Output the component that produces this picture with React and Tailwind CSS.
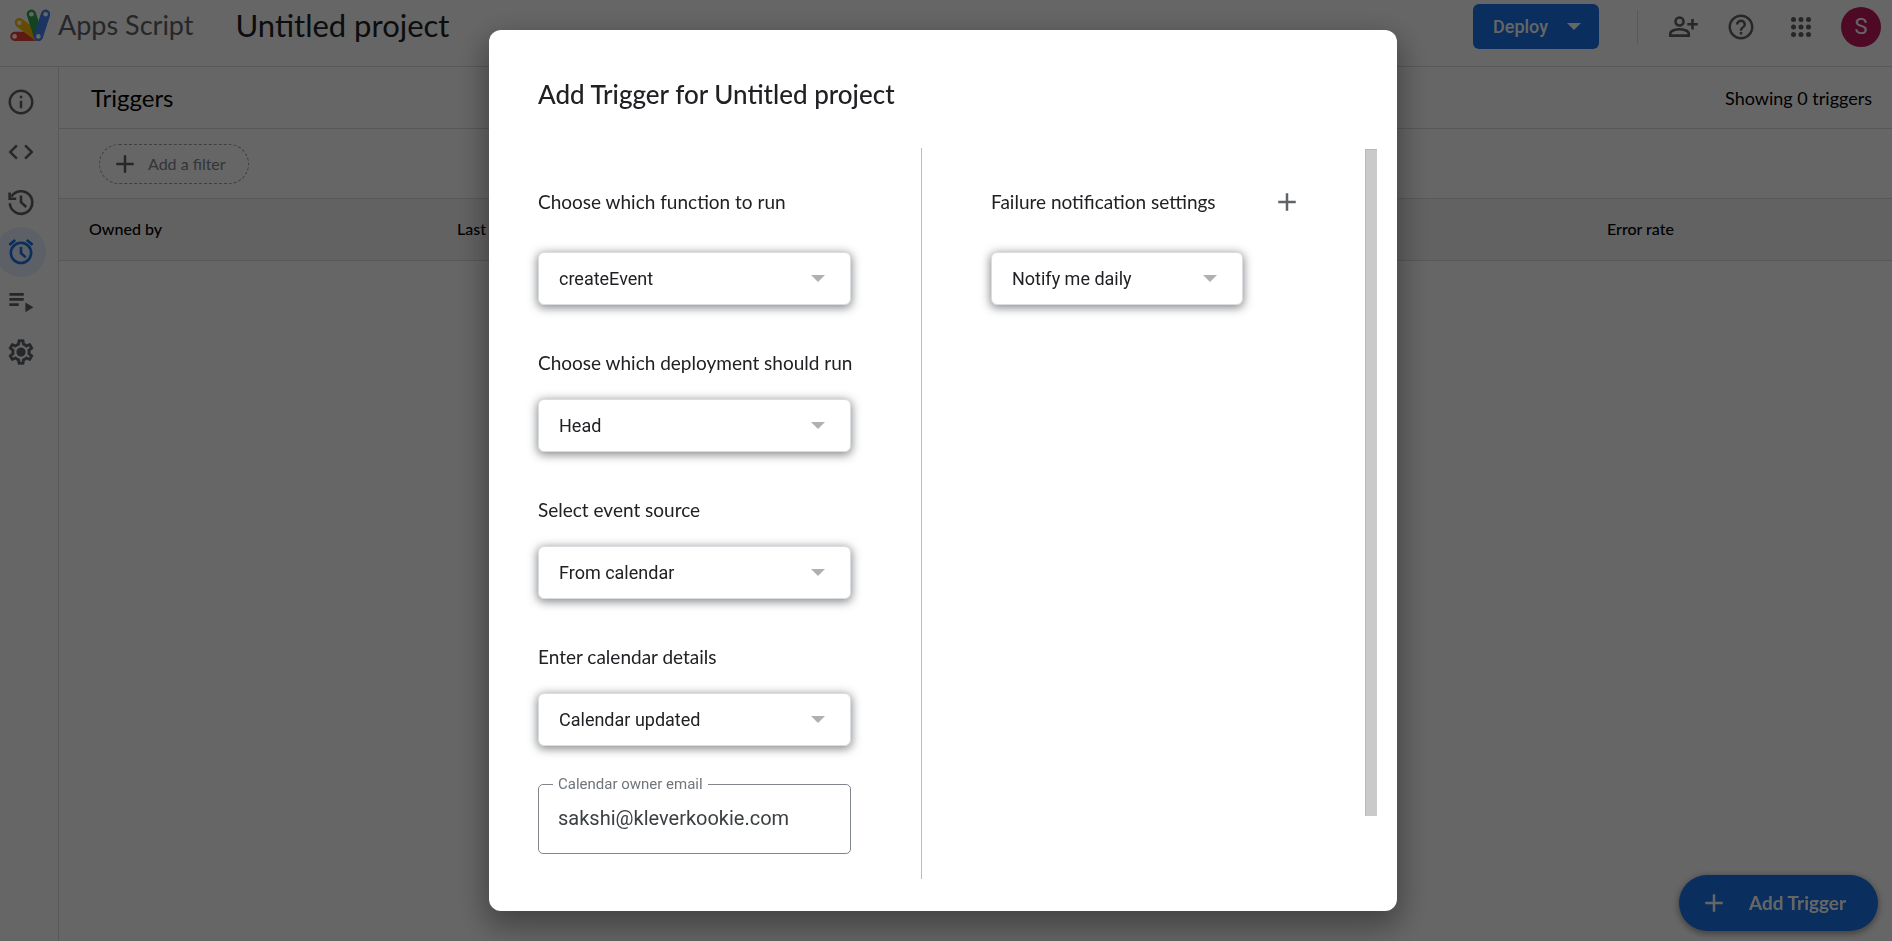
import { useState } from "react";
import { MdAdd, MdCode, MdHelpOutline, MdInfoOutline } from "react-icons/md";

function AppsScriptLogo() {
  return (
    <svg viewBox="0 0 40 33" className="h-[33px] w-10" aria-hidden="true">
      <g strokeLinecap="round" fill="none" strokeWidth="9.4">
        <path d="M5 27.400h23" stroke="#ea4335" />
        <path d="M9.400 13.700L27 27" stroke="#fbbc04" />
        <path d="M21.400 5.200L28 26" stroke="#34a853" />
        <path d="M35.600 5.200L28.400 27.400" stroke="#4285f4" />
      </g>
      <g fill="#fff">
        <circle cx="4.600" cy="27.400" r="2.300" />
        <circle cx="9.400" cy="13.700" r="2.300" />
        <circle cx="21.400" cy="5.200" r="2.300" />
        <circle cx="35.600" cy="5.200" r="2.300" />
        <circle cx="28.400" cy="27.400" r="2.300" />
      </g>
    </svg>
  );
}

function HistoryIcon({ size }) {
  return (
    <svg viewBox="0 0 24 24" width={size} height={size} fill="none" stroke="currentColor" strokeWidth="2.1">
      <path d="M3.050 13a9 9 0 1 0 1.300-5.300" />
      <path d="M2.900 4.400v5h5.300" />
      <path d="M12 6.800v5.400l4.200 3.800" />
    </svg>
  );
}

function AlarmIcon({ size }) {
  return (
    <svg viewBox="0 0 24 24" width={size} height={size} fill="none" stroke="currentColor" strokeWidth="2.1">
      <circle cx="12" cy="12.700" r="8.100" />
      <path d="M2.700 6.300L7.400 2.400M21.300 6.300L16.600 2.400" />
      <path d="M12 8v5l3.800 3.300" />
    </svg>
  );
}

function ExecutionsIcon({ size }) {
  return (
    <svg viewBox="0 0 24 24" width={size} height={size} fill="currentColor">
      <path d="M2.700 4.800h11.500v2.200H2.700zM2.700 8.800h11.500v2.200H2.700zM2.700 12.900h7.500v2.200H2.700z" />
      <path d="M15.500 12.300v7.900l6.400-3.950z" />
    </svg>
  );
}

function GearIcon({ size }) {
  return (
    <svg viewBox="0 0 24 24" width={size} height={size} fill="currentColor">
      <path
        stroke="currentColor"
        strokeWidth="0.300"
        d="M19.430 12.980c.040-.320.070-.640.070-.980 0-.340-.030-.660-.070-.980l2.110-1.650c.190-.150.240-.420.120-.640l-2-3.460a.5.5 0 0 0-.610-.220l-2.490 1c-.520-.400-1.080-.730-1.690-.980l-.380-2.650A.488.488 0 0 0 14 2h-4c-.250 0-.460.180-.490.420l-.380 2.650c-.610.250-1.170.590-1.690.980l-2.490-1a.566.566 0 0 0-.180-.030c-.170 0-.340.090-.430.250l-2 3.460c-.130.220-.070.490.120.640l2.110 1.650c-.040.320-.070.650-.070.980 0 .330.030.660.070.980l-2.110 1.650c-.190.150-.240.420-.120.640l2 3.460a.5.5 0 0 0 .610.220l2.490-1c.520.400 1.080.730 1.690.980l.380 2.650c.030.240.240.420.490.420h4c.250 0 .460-.180.490-.420l.380-2.650c.610-.250 1.170-.590 1.690-.980l2.490 1c.060.020.120.030.180.030.170 0 .340-.090.430-.250l2-3.460c.120-.220.070-.490-.120-.640l-2.110-1.650zm-1.980-1.710c.040.310.050.520.050.730 0 .210-.020.430-.050.730l-.140 1.130.890.700 1.080.840-.700 1.210-1.270-.510-1.040-.420-.900.680c-.430.320-.840.560-1.250.730l-1.060.430-.160 1.130-.200 1.350h-1.400l-.190-1.350-.160-1.130-1.060-.430c-.430-.180-.830-.410-1.230-.710l-.910-.700-1.060.430-1.270.510-.700-1.210 1.080-.840.890-.700-.140-1.130c-.030-.310-.050-.540-.050-.740s.020-.430.050-.730l.140-1.130-.890-.700-1.080-.840.700-1.210 1.270.510 1.040.420.900-.680c.430-.320.840-.560 1.250-.730l1.060-.430.160-1.130.200-1.350h1.390l.190 1.350.160 1.130 1.060.430c.430.180.830.410 1.230.710l.910.700 1.060-.430 1.270-.510.700 1.210-1.070.850-.890.700.140 1.130z"
      />
      <circle cx="12" cy="12" r="3.700" />
    </svg>
  );
}

function PersonAddIcon() {
  return (
    <svg viewBox="0 0 30 30" width="30" height="30" fill="none" stroke="currentColor" strokeWidth="2.600">
      <circle cx="11.500" cy="9.500" r="4" />
      <path d="M2.300 23.600v-2.200c0-2.800 6-4.200 9.200-4.200s9.200 1.400 9.200 4.200v2.200z" />
      <path d="M24.500 7v10.400M19.300 12.200h10.400" />
    </svg>
  );
}

const dots = [6, 12, 18];

function AppsGridIcon() {
  return (
    <svg viewBox="0 0 24 24" width="30" height="30" fill="currentColor">
      {dots.map((y) => dots.map((x) => <circle key={`${x}-${y}`} cx={x} cy={y} r="2" />))}
    </svg>
  );
}

const navItems = [
  { label: "Overview", icon: MdInfoOutline },
  { label: "Editor", icon: MdCode },
  { label: "Project History", icon: HistoryIcon },
  { label: "Triggers", icon: AlarmIcon, active: true },
  { label: "Executions", icon: ExecutionsIcon },
  { label: "Project Settings", icon: GearIcon },
];

function Caret({ className }) {
  return (
    <svg viewBox="0 0 14 7" className={className} fill="currentColor" aria-hidden="true">
      <path d="M0 0h14L7 7z" />
    </svg>
  );
}

function SelectBox({ id, value, options, onChange }) {
  return (
    <div className="relative">
      <select
        id={id}
        value={value}
        onChange={(e) => onChange(e.target.value)}
        className="block h-[53px] w-full appearance-none rounded-md border border-[#dadce0] bg-white pl-5 pr-12 font-[Roboto,sans-serif] text-lg text-[#202124] shadow-[0_2px_10px_1px_rgba(60,64,67,0.6)] outline-none"
      >
        {options.map((option) => (
          <option key={option}>{option}</option>
        ))}
      </select>
      <Caret className="pointer-events-none absolute right-[26px] top-[23px] h-[7px] w-[14px] text-[#b0b0b0]" />
    </div>
  );
}

const fields = [
  {
    id: "fn",
    label: "Choose which function to run",
    options: ["createEvent"],
  },
  {
    id: "deployment",
    label: "Choose which deployment should run",
    options: ["Head"],
  },
  {
    id: "source",
    label: "Select event source",
    options: ["From calendar", "From spreadsheet", "Time-driven"],
  },
  {
    id: "details",
    label: "Enter calendar details",
    options: ["Calendar updated"],
  },
];

function TriggerDialog() {
  const [values, setValues] = useState({
    fn: "createEvent",
    deployment: "Head",
    source: "From calendar",
    details: "Calendar updated",
    notify: "Notify me daily",
  });
  const [email, setEmail] = useState("sakshi@kleverkookie.com");

  const update = (key) => (value) => setValues((prev) => ({ ...prev, [key]: value }));

  return (
    <div
      role="dialog"
      aria-modal="true"
      aria-labelledby="dialog-title"
      className="flex w-full max-w-[908px] flex-col rounded-xl bg-white pb-8 pl-[49px] pr-5 pt-11 text-[#202124] shadow-[0_12px_30px_4px_rgba(0,0,0,0.35)]"
    >
      <h2 id="dialog-title" className="text-[26px] font-medium leading-10">
        Add Trigger for Untitled project
      </h2>

      <div className="mt-[34px] flex">
        <div className="w-[384px] shrink-0 border-r border-[#bdbdbd] pb-[25px] pt-10">
          {fields.map((field, i) => (
            <div key={field.id} className="mb-11 last-of-type:mb-[30px]">
              <label
                htmlFor={field.id}
                className={i === 0 ? "mb-9 block text-[19px] leading-7" : "mb-[22px] block text-[19px] leading-7"}
              >
                {field.label}
              </label>
              <div className="w-[313px]">
                <SelectBox
                  id={field.id}
                  value={values[field.id]}
                  options={field.options}
                  onChange={update(field.id)}
                />
              </div>
            </div>
          ))}

          <fieldset className="h-[78px] w-[313px] rounded-[5px] border border-[#80868b] pl-[14px]">
            <legend className="px-[5px] font-[Roboto,sans-serif] text-[15px] leading-4 text-[#70757a]">
              <label htmlFor="email">Calendar owner email</label>
            </legend>
            <input
              id="email"
              type="email"
              value={email}
              onChange={(e) => setEmail(e.target.value)}
              className="mt-[10px] block h-8 w-full bg-transparent pl-[5px] font-[Roboto,sans-serif] text-xl text-[#3c4043] outline-none"
            />
          </fieldset>
        </div>

        <div className="grow pl-[69px] pt-10">
          <div className="mb-9 flex h-7 items-center justify-between pr-[63px]">
            <label htmlFor="notify" className="text-[19px] leading-7">
              Failure notification settings
            </label>
            <button type="button" aria-label="Add notification" className="text-[#5f6368]">
              <MdAdd size={30} />
            </button>
          </div>
          <div className="w-[252px]">
            <SelectBox
              id="notify"
              value={values.notify}
              options={["Notify me daily", "Notify me weekly"]}
              onChange={update("notify")}
            />
          </div>
        </div>

        <div className="mb-[63px] mt-px w-3 shrink-0 border-l border-t border-[#b8b8b8] bg-[#cacaca]" />
      </div>
    </div>
  );
}

function App() {
  return (
    <div className="flex h-screen flex-col overflow-hidden bg-white font-[Lato,sans-serif] text-[#202124]">
      <header className="flex h-[67px] shrink-0 items-start justify-between border-b border-[#dadce0] pl-[10px] pr-[11px]">
        <div className="flex items-center pt-[7px]">
          <AppsScriptLogo />
          <span className="ml-2 text-[27px] leading-9 text-[#5f6368]">Apps Script</span>
          <h1 className="ml-[42px] text-[31px] leading-9">Untitled project</h1>
        </div>

        <div className="flex items-center pt-1 text-[#5f6368]">
          <button
            type="button"
            className="flex h-[45px] w-[126px] items-center justify-between rounded-md bg-[#1a73e8] pl-5 pr-[18px] font-[Roboto,sans-serif] text-lg font-medium text-white"
          >
            Deploy
            <Caret className="h-[7px] w-[14px]" />
          </button>
          <div className="ml-[38px] h-[34px] w-px bg-[#dadce0]" />
          <button type="button" aria-label="Share" className="ml-[30px]">
            <PersonAddIcon />
          </button>
          <button type="button" aria-label="Help" className="ml-7">
            <MdHelpOutline size={30} />
          </button>
          <button type="button" aria-label="Google apps" className="ml-[30px]">
            <AppsGridIcon />
          </button>
          <button
            type="button"
            aria-label="Account"
            className="ml-[25px] size-10 rounded-full bg-[#c2185b] font-[Roboto,sans-serif] text-[22px] text-white"
          >
            S
          </button>
        </div>
      </header>

      <div className="flex grow">
        <nav className="w-[59px] shrink-0 border-r border-[#dadce0] pt-[10px] text-[#5f6368]">
          {navItems.map(({ label, icon: Icon, active }) => (
            <a
              key={label}
              href="#"
              aria-label={label}
              className={
                active
                  ? "-ml-1 flex size-[50px] items-center justify-center rounded-full bg-[#e8f0fe] text-[#1a73e8]"
                  : "-ml-1 flex size-[50px] items-center justify-center"
              }
            >
              <Icon size={30} />
            </a>
          ))}
        </nav>

        <main className="grow">
          <div className="flex h-[62px] items-center justify-between border-b border-[#dadce0] pl-8 pr-5 text-black">
            <h2 className="text-2xl">Triggers</h2>
            <span className="text-lg">Showing 0 triggers</span>
          </div>

          <div className="flex h-[70px] items-center border-b border-[#dadce0] pl-10">
            <button
              type="button"
              className="flex h-10 w-[150px] items-center gap-2 rounded-full border border-dashed border-[#9aa0a6] pl-[10px] text-base text-[#80868b]"
            >
              <MdAdd size={30} className="text-[#5f6368]" />
              Add a filter
            </button>
          </div>

          <table className="w-full table-fixed text-left text-base text-black">
            <thead>
              <tr className="h-[61px] border-b border-[#dadce0] bg-[#f5f5f5]">
                <th className="w-[368px] pl-[30px] font-medium">Owned by</th>
                <th className="pl-[30px] font-medium">Last run</th>
                <th className="w-[315px] pl-[30px] font-medium">Error rate</th>
              </tr>
            </thead>
          </table>
        </main>
      </div>

      <button
        type="button"
        className="fixed bottom-[10px] right-[14px] flex h-14 w-[199px] items-center gap-5 rounded-full bg-[#1a73e8] pl-5 text-[19px] font-bold text-white shadow-[0_2px_6px_1px_rgba(0,0,0,0.35)]"
      >
        <MdAdd size={30} />
        Add Trigger
      </button>

      <div className="fixed inset-0 flex items-center justify-center bg-black/60 pr-[6px]">
        <TriggerDialog />
      </div>
    </div>
  );
}

export default App;
